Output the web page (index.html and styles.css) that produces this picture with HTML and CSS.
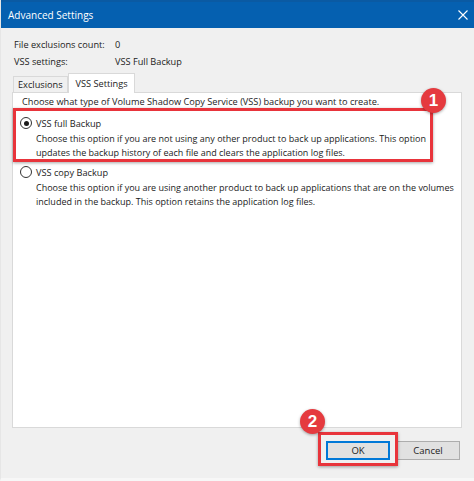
FILE: index.html
```html
<!DOCTYPE html>
<html>
<head>
<meta charset="utf-8">
<link rel="stylesheet" href="styles.css">
</head>
<body>
<div class="window">
  <div class="titlebar">
    <span class="title">Advanced Settings</span>
    <svg class="close" width="10" height="10" viewBox="0 0 10 10"><path d="M0.5 0.5L9.5 9.5M9.5 0.5L0.5 9.5" stroke="#fff" stroke-width="1.1" fill="none"/></svg>
  </div>
  <div class="content">
    <div class="info">
      <span>File exclusions count:</span><span>0</span>
      <span>VSS settings:</span><span>VSS Full Backup</span>
    </div>
    <div class="tabs">
      <div class="tab">Exclusions</div>
      <div class="tab active">VSS Settings</div>
    </div>
    <div class="panel">
      <div class="intro">Choose what type of Volume Shadow Copy Service (VSS) backup you want to create.</div>
      <div class="option first">
        <div class="radio-row"><span class="radio checked"></span><span>VSS full Backup</span></div>
        <div class="desc">Choose this option if you are not using any other product to back up applications. This option<br>updates the backup history of each file and clears the application log files.</div>
      </div>
      <div class="option">
        <div class="radio-row"><span class="radio"></span><span>VSS copy Backup</span></div>
        <div class="desc">Choose this option if you are using another product to back up applications that are on the volumes<br>included in the backup. This option retains the application log files.</div>
      </div>
    </div>
  </div>
  <div class="footer">
    <button class="btn default">OK</button>
    <button class="btn">Cancel</button>
  </div>
  <div class="hl hl1"></div>
  <div class="hl hl2"></div>
  <div class="badge b1">1</div>
  <div class="badge b2">2</div>
</div>
</body>
</html>
```
FILE: styles.css
```css
html, body { margin: 0; padding: 0; }
body { font-family: "Open Sans", "Noto Sans", sans-serif; font-size: 9.2px; color: #1b1b1b; }
.window { position: relative; width: 474px; height: 481px; background: #f0f0f0; overflow: hidden; box-sizing: border-box; border-left: 1px solid #e6e6e6; border-bottom: 3px solid #f7f7f7; }
.titlebar { height: 28px; background: #0560b0; border-top: 2px solid #0a5aa3; box-sizing: border-box; display: flex; align-items: center; justify-content: space-between; padding: 0 6px 0 7px; color: #fff; font-size: 10px; }
.content { padding: 0 12px 0 11px; }
.info { display: grid; grid-template-columns: 101px auto; grid-auto-rows: 17px; align-items: center; padding: 8px 0 0 2px; line-height: 17px; }
.tabs { display: flex; margin-top: 3px; padding-left: 1px; height: 19px; align-items: flex-end; position: relative; z-index: 1; }
.tab { height: 15px; line-height: 15px; padding: 0 4px; border: 1px solid #d9d9d9; border-bottom: none; background: #f0f0f0; box-sizing: content-box; }
.tab.active { height: 19px; line-height: 19px; background: #fff; margin-bottom: -1px; padding: 0 6px 0 7px; }
.panel { background: #fff; border: 1px solid #d9d9d9; height: 333px; padding: 1px 7px 0; box-sizing: content-box; }
.intro { line-height: 16px; margin-left: 2px; white-space: nowrap; }
.option { margin-top: 5px; }
.option + .option { margin-top: 4px; }
.radio-row { display: flex; align-items: center; height: 16px; gap: 4px; }
.radio { width: 10px; height: 10px; border: 1px solid #333; border-radius: 50%; box-sizing: content-box; position: relative; }
.radio.checked::after { content: ""; position: absolute; left: 2.5px; top: 2.5px; width: 5px; height: 5px; border-radius: 50%; background: #1b1b1b; }
.desc { margin: 1px 0 0 16px; line-height: 14px; white-space: nowrap; font-size: 9px; }
.footer { display: flex; justify-content: flex-end; gap: 6px; padding: 13px 14px 0 0; }
.btn { font-family: inherit; font-size: 9.5px; color: #1b1b1b; width: 64px; height: 19px; padding: 0; background: #e1e1e1; border: 1px solid #adadad; }
.btn.default { border-color: #0078d7; box-shadow: inset 0 0 0 1px #0078d7; }
.hl { position: absolute; border: 3px solid #e8343b; box-shadow: 0 1px 3px rgba(0,0,0,0.35); }
.hl1 { left: 12px; top: 108px; width: 414px; height: 48px; }
.hl2 { left: 317px; top: 432px; width: 74px; height: 28px; }
.badge { position: absolute; width: 25px; height: 25px; border-radius: 50%; background: #e53a3f; color: #fff; font-family: "Liberation Sans", Arial, sans-serif; font-weight: bold; font-size: 17px; line-height: 25px; text-align: center; box-shadow: 0 1px 3px rgba(0,0,0,0.35); }
.b1 { left: 420px; top: 88px; }
.b2 { left: 299px; top: 409px; }
```
